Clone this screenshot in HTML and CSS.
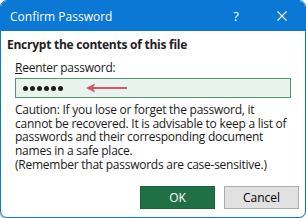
FILE: index.html
```html
<!DOCTYPE html>
<html lang="en">
<head>
    <meta charset="UTF-8">
    <title>Confirm Password</title>
    <link rel="stylesheet" href="styles.css">
</head>
<body>
    <div class="dialog">
        <div class="titlebar">
            <span class="title">Confirm Password</span>
            <span class="caption-btn help">?</span>
            <span class="caption-btn close">
                <svg width="10" height="10" viewBox="0 0 10 10">
                    <path d="M0.5 0.5 L9.5 9.5 M9.5 0.5 L0.5 9.5" stroke="#fff" stroke-width="1.1" fill="none"/>
                </svg>
            </span>
        </div>

        <div class="content">
            <div class="heading">Encrypt the contents of this file</div>

            <div class="field">
                <label class="field-label" for="pwd"><u>R</u>eenter password:</label>
                <div class="pwd-box" id="pwd">
                    <span class="dots">
                        <span class="dot"></span><span class="dot"></span><span class="dot"></span>
                        <span class="dot"></span><span class="dot"></span><span class="dot"></span>
                    </span>
                    <svg class="arrow" width="42" height="10" viewBox="0 0 42 10">
                        <path d="M5 5 H41" stroke="#d9546a" stroke-width="2" fill="none"/>
                        <path d="M0 5 L9 0.5 L7 5 L9 9.5 Z" fill="#d9546a"/>
                    </svg>
                </div>

                <p class="caution">
                    Caution: If you lose or forget the password, it<br>
                    cannot be recovered. It is advisable to keep a list of<br>
                    passwords and their corresponding document<br>
                    names in a safe place.
                </p>
                <p class="caution note">(Remember that passwords are case-sensitive.)</p>
            </div>

            <div class="buttons">
                <button class="btn btn-ok">OK</button>
                <button class="btn btn-cancel">Cancel</button>
            </div>
        </div>
    </div>
</body>
</html>
```

FILE: styles.css
```css
body {
    margin: 0;
    background: #fff;
    font-family: 'Open Sans', 'Noto Sans', sans-serif;
    font-size: 12px;
    color: #1a1a1a;
}

.dialog {
    width: 306px;
    height: 218px;
    box-sizing: border-box;
    border: 1px solid #0a78d4;
    border-radius: 7px;
    overflow: hidden;
    background: #fff;
    box-shadow: -1px 1px 2px rgba(0, 0, 0, 0.25);
}

.titlebar {
    height: 30px;
    background: #0a78d4;
    color: #fff;
    display: flex;
    align-items: center;
    padding-left: 9px;
}

.title {
    flex: 1;
    font-size: 12px;
}

.caption-btn {
    width: 46px;
    height: 30px;
    display: flex;
    align-items: center;
    justify-content: center;
}

.help {
    font-size: 13px;
}

.content {
    padding: 6px 6px 0 6px;
    letter-spacing: -0.25px;
}

.heading {
    font-weight: bold;
    line-height: 16px;
    color: #222;
}

.field {
    margin: 7px 8px 0 8px;
}

.field-label {
    display: block;
    line-height: 16px;
}

.pwd-box {
    margin-top: 2px;
    height: 20px;
    box-sizing: border-box;
    border: 1px solid #4f9b6b;
    background: #e9f3ed;
    display: flex;
    align-items: center;
    padding-left: 7px;
}

.dots {
    display: flex;
    gap: 2px;
}

.dot {
    width: 5px;
    height: 5px;
    border-radius: 50%;
    background: #1c1c1c;
}

.arrow {
    margin-left: 23px;
}

.caution {
    margin: 5px 0 0 0;
    line-height: 13.5px;
    white-space: nowrap;
}

.caution.note {
    margin-top: 1px;
}

.buttons {
    display: flex;
    justify-content: flex-end;
    gap: 9px;
    margin-top: 14px;
    letter-spacing: 0;
}

.btn {
    width: 75px;
    height: 23px;
    font-family: inherit;
    font-size: 12px;
    padding: 0;
}

.btn-ok {
    background: #1f7145;
    border: 1px solid #1a6339;
    color: #fff;
}

.btn-cancel {
    background: #e1e1e1;
    border: 1px solid #adadad;
    color: #000;
}
```
